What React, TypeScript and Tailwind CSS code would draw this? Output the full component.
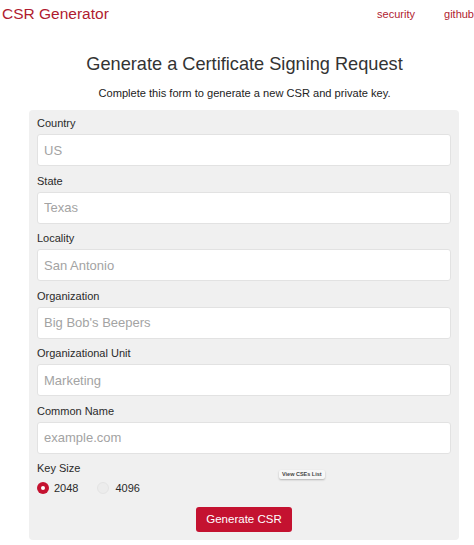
import React from "react";

const FIELDS = [
  { label: "Country", placeholder: "US" },
  { label: "State", placeholder: "Texas" },
  { label: "Locality", placeholder: "San Antonio" },
  { label: "Organization", placeholder: "Big Bob's Beepers" },
  { label: "Organizational Unit", placeholder: "Marketing" },
  { label: "Common Name", placeholder: "example.com" },
];

function Field({ label, placeholder }: { label: string; placeholder: string }) {
  return (
    <div className="flex flex-col mb-[8.5px]">
      <label className="text-[11px] leading-[13px] text-[#2a2a2a] mb-[4px]">{label}</label>
      <input
        placeholder={placeholder}
        className="h-[32px] w-full rounded-[3px] border border-[#e2e2e2] bg-white px-[6px] text-[13px] text-[#333] placeholder:text-[#a3a3a3] outline-none"
      />
    </div>
  );
}

export default function App() {
  return (
    <div
      className="w-[474px] h-[545px] overflow-hidden bg-white text-[#333]"
      style={{ fontFamily: '"Liberation Sans", Arial, sans-serif' }}
    >
      <header className="flex items-center justify-between h-[28px] pl-[2px]">
        <span className="text-[15.5px] text-[#b01b30]">CSR Generator</span>
        <nav className="flex items-center gap-[29px] text-[11px] text-[#b01b30]">
          <a>security</a>
          <a>github</a>
        </nav>
      </header>

      <div className="w-[489px]">
        <h1 className="mt-[25px] text-center text-[18.2px] leading-[22px] font-light text-[#333]">
          Generate a Certificate Signing Request
        </h1>
        <p className="mt-[11.5px] text-center text-[11.1px] leading-[13px] text-[#222]">
          Complete this form to generate a new CSR and private key.
        </p>
      </div>

      <form className="relative mx-[29px] mt-[10.5px] rounded-[4px] bg-[#f0f0f0] px-[8px] pt-[7px] pb-[8px] w-[430px]">
        {FIELDS.map((f) => (
          <Field key={f.label} {...f} />
        ))}

        <div className="text-[11px] leading-[13px] text-[#2a2a2a]">Key Size</div>
        <div className="mt-[5px] flex items-center h-[16px] text-[11px] text-[#2a2a2a]">
          <label className="flex items-center gap-[5px]">
            <span className="flex h-[12px] w-[12px] items-center justify-center rounded-full bg-[#c41230]">
              <span className="h-[4px] w-[4px] rounded-full bg-white" />
            </span>
            2048
          </label>
          <label className="ml-[19px] flex items-center gap-[6px]">
            <span className="h-[12px] w-[12px] rounded-full border border-[#e4e4e4] bg-[#ececec]" />
            4096
          </label>
        </div>

        <div className="mt-[11px] flex justify-center">
          <button
            type="button"
            className="h-[25px] w-[96px] rounded-[3px] bg-[#c41230] text-[11.5px] text-white"
          >
            Generate CSR
          </button>
        </div>

        <div className="absolute left-[250px] top-[360px] rounded-[2px] bg-[#f7f7f7] px-[3px] text-[5.5px] leading-[9px] font-bold text-[#444] shadow-[0_1px_2px_rgba(0,0,0,0.25)]">
          View CSEs List
        </div>
      </form>
    </div>
  );
}
